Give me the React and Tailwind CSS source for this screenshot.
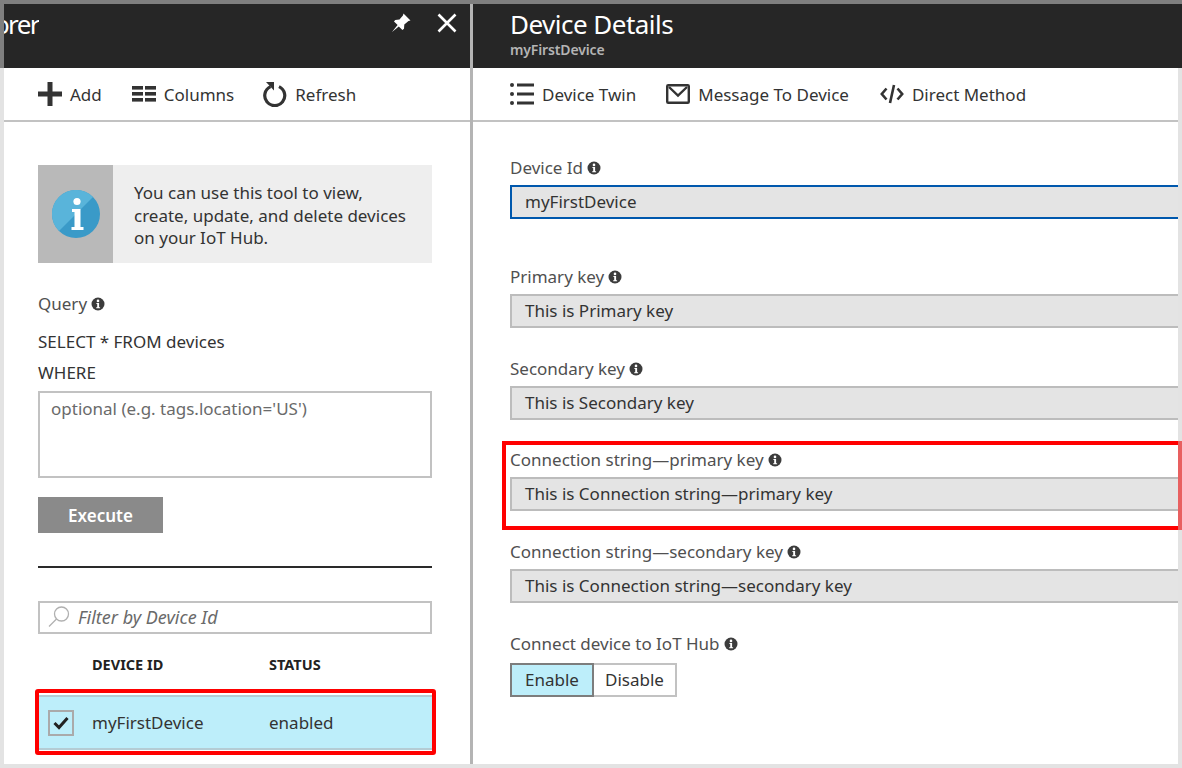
import React from "react";

const fontStack = "font-['Noto_Sans','Open_Sans',sans-serif]";

const InfoDot = () => (
  <svg width="14" height="14" viewBox="0 0 14 14" className="shrink-0">
    <circle cx="7" cy="7" r="6.5" fill="#3c3c3c" />
    <circle cx="7" cy="3.9" r="1.3" fill="#fff" />
    <path d="M5.4 6h2.7v4.2h1V11.3H5.2v-1.1h1V7.1h-.8z" fill="#fff" />
  </svg>
);

const ToolButton = ({ icon, label, className }) => (
  <div className={`flex items-center gap-[8px] ${className || ""}`}>
    {icon}
    <span className="pt-[1px]">{label}</span>
  </div>
);

const Label = ({ children, className }) => (
  <div className={`flex items-center gap-[4px] h-[24px] text-[17px] text-[#505050] ${className || ""}`}>
    <span className="whitespace-nowrap">{children}</span>
    <InfoDot />
  </div>
);

const Field = ({ label, value, focused, className }) => (
  <div className={className}>
    <Label>{label}</Label>
    <div
      className={`mt-[5px] h-[34px] flex items-center pl-[13px] bg-[#e4e4e4] text-[17px] text-[#333] border-y-2 border-l-2 ${
        focused ? "border-[#0058ad]" : "border-[#bcbcbc]"
      }`}
    >
      {value}
    </div>
  </div>
);

const Header = ({ children }) => <div className="h-[64px] bg-[#262626] text-white shrink-0">{children}</div>;

const Toolbar = ({ children, className }) => (
  <div className={`h-[54px] shrink-0 flex items-center border-b-2 border-[#c2c2c2] text-[17px] text-[#333] ${className}`}>
    {children}
  </div>
);

const LeftPanel = () => (
  <div className="w-[466px] shrink-0 flex flex-col">
    <Header>
      <div className="flex items-start h-full">
        <div className="w-[35px] overflow-hidden flex justify-end pt-[4px] text-[26px] leading-[32px] tracking-[-0.06em]">
          <span className="whitespace-nowrap">Device Explorer</span>
        </div>
        <div className="ml-auto flex items-center gap-[24px] pt-[8px] pr-[12px]">
          <svg width="22" height="22" viewBox="0 0 22 22">
            <path d="M13.5 1.5l7 7-2 .6-4.2 3.4-.3 4.3-1.6 1.2-3.6-3.6L2 20l5.6-6.9L4 9.5l1.2-1.6 4.3-.3 3.4-4.2z" fill="#fff" />
          </svg>
          <svg width="22" height="22" viewBox="0 0 22 22" fill="none" stroke="#fff" strokeWidth="2.6">
            <path d="M2.5 2.5l17 17M19.5 2.5l-17 17" />
          </svg>
        </div>
      </div>
    </Header>
    <Toolbar className="pl-[34px]">
      <ToolButton
        className="gap-[7px]"
        icon={
          <svg width="24" height="24" viewBox="0 0 24 24" fill="#333">
            <path d="M9.5 0h5v9.5H24v5h-9.5V24h-5v-9.5H0v-5h9.5z" />
          </svg>
        }
        label="Add"
      />
      <ToolButton
        className="ml-[30px]"
        icon={
          <svg width="24" height="16" viewBox="0 0 24 16" fill="#333">
            <rect x="0" y="0" width="11" height="3.6" />
            <rect x="13" y="0" width="11" height="3.6" />
            <rect x="0" y="6" width="11" height="3.6" />
            <rect x="13" y="6" width="11" height="3.6" />
            <rect x="0" y="12" width="11" height="3.6" />
            <rect x="13" y="12" width="11" height="3.6" />
          </svg>
        }
        label="Columns"
      />
      <ToolButton
        className="ml-[29px]"
        icon={
          <svg width="24" height="26" viewBox="0 0 24 26" fill="none">
            <path d="M16 5.6a10 10 0 1 1-8.5 0" stroke="#333" strokeWidth="3.2" />
            <path d="M3 1h8v8.5z" fill="#333" />
          </svg>
        }
        label="Refresh"
      />
    </Toolbar>
    <div className="flex-1 pl-[34px] pr-[38px] pt-[43px] text-[17px] text-[#333]">
      <div className="flex h-[98px] bg-[#eeeeee]">
        <div className="w-[75px] bg-[#b9b9b9] flex items-center justify-center">
          <svg width="48" height="48" viewBox="0 0 48 48">
            <circle cx="24" cy="24" r="24" fill="#3a9ac8" />
            <path d="M7 41A24 24 0 0 1 41 7z" fill="#59b4da" />
            <circle cx="25" cy="11.5" r="3.6" fill="#fff" />
            <path d="M20 19h8.5v18h3v3H19.5v-3h3V22h-2.5z" fill="#fff" />
          </svg>
        </div>
        <div className="pl-[21px] pt-[17px] leading-[22.5px] whitespace-nowrap">
          You can use this tool to view,
          <br />
          create, update, and delete devices
          <br />
          on your IoT Hub.
        </div>
      </div>
      <Label className="mt-[29px]">Query</Label>
      <div className="mt-[14px] h-[24px] leading-[24px]">SELECT * FROM devices</div>
      <div className="mt-[7px] h-[24px] leading-[24px]">WHERE</div>
      <div className="mt-[6px] h-[87px] border-2 border-[#c2c2c2] pl-[11px] pt-[4px] leading-[24px] text-[#6a6a6a]">
        optional (e.g. tags.location='US')
      </div>
      <div className="mt-[19px] w-[125px] h-[36px] pt-[2px] bg-[#8a8a8a] text-white font-semibold flex items-center justify-center">
        Execute
      </div>
      <div className="mt-[33px] h-[2px] bg-[#2a2a2a]" />
      <div className="mt-[33px] h-[33px] border-2 border-[#c2c2c2] flex items-center pl-[7px] gap-[7px] italic text-[18px] leading-[26px] pb-[2px] text-[#6a6a6a]">
        <svg width="24" height="24" viewBox="0 0 24 24" fill="none" stroke="#b0b0b0" strokeWidth="1.3">
          <circle cx="14.5" cy="9" r="7" />
          <path d="M9.5 14L2 21.5" />
        </svg>
        Filter by Device Id
      </div>
      <div className="mt-[19px] h-[24px] flex items-center text-[14.5px] font-bold text-[#222]">
        <div className="w-[231px] pl-[54px]">DEVICE ID</div>
        <div>STATUS</div>
      </div>
      <div className="relative mt-[18px] h-[55px] bg-[#bdeefa] border-y-2 border-[#b4ccd4] flex items-center">
        <div className="absolute -left-[3px] -right-[4px] -top-[8px] -bottom-[7px] border-4 border-[#ff0000] rounded-[3px]" />
        <div className="w-[54px] pl-[10px]">
          <div className="w-[26px] h-[26px] border-2 border-[#aaaaaa] flex items-center justify-center">
            <svg width="16" height="14" viewBox="0 0 16 14" fill="none" stroke="#222" strokeWidth="3">
              <path d="M1.5 7l4.5 4.5L14.5 2" />
            </svg>
          </div>
        </div>
        <div className="w-[177px]">myFirstDevice</div>
        <div>enabled</div>
      </div>
    </div>
  </div>
);

const RightPanel = () => (
  <div className="flex-1 flex flex-col min-w-0">
    <Header>
      <div className="pl-[37px] pt-[3px]">
        <div className="text-[26px] leading-[34px] tracking-[-0.02em]">Device Details</div>
        <div className="text-[14px] leading-[18px] font-semibold tracking-[-0.01em] text-[#b4b4b4]">myFirstDevice</div>
      </div>
    </Header>
    <Toolbar className="pl-[37px]">
      <ToolButton
        icon={
          <svg width="24" height="24" viewBox="0 0 24 24" fill="#333">
            <circle cx="2" cy="3" r="2" />
            <circle cx="2" cy="12" r="2" />
            <circle cx="2" cy="21" r="2" />
            <rect x="7" y="1.5" width="17" height="3" />
            <rect x="7" y="10.5" width="17" height="3" />
            <rect x="7" y="19.5" width="17" height="3" />
          </svg>
        }
        label="Device Twin"
      />
      <ToolButton
        className="ml-[30px]"
        icon={
          <svg width="24" height="20" viewBox="0 0 24 20" fill="none" stroke="#333" strokeWidth="2.4">
            <rect x="1.2" y="1.2" width="21.6" height="17.6" rx="1" />
            <path d="M3 3l9 8.5L21 3" />
          </svg>
        }
        label="Message To Device"
      />
      <ToolButton
        className="ml-[31px]"
        icon={
          <svg width="24" height="20" viewBox="0 0 24 20" fill="none" stroke="#333" strokeWidth="2.6">
            <path d="M6.5 4.5L1.8 10l4.7 5.5M17.5 4.5l4.7 5.5-4.7 5.5M14 1l-4 18" />
          </svg>
        }
        label="Direct Method"
      />
    </Toolbar>
    <div className="relative flex-1 pl-[37px] pt-[34px]">
      <Field label="Device Id" value="myFirstDevice" focused />
      <Field className="mt-[46px]" label="Primary key" value="This is Primary key" />
      <Field className="mt-[29px]" label="Secondary key" value="This is Secondary key" />
      <Field className="mt-[28px]" label="Connection string—primary key" value="This is Connection string—primary key" />
      <Field className="mt-[29px]" label="Connection string—secondary key" value="This is Connection string—secondary key" />
      <Label className="mt-[29px]">Connect device to IoT Hub</Label>
      <div className="mt-[7px] flex text-[17px] text-[#333]">
        <div className="w-[84px] h-[34px] bg-[#bdeefa] border-2 border-[#7d7d7d] flex items-center justify-center">Enable</div>
        <div className="w-[83px] h-[34px] border-2 border-l-0 border-[#c2c2c2] flex items-center justify-center">Disable</div>
      </div>
      <div className="absolute left-[29px] right-0 top-[319px] h-[89px] border-4 border-r-0 border-[#ff0000]" />
    </div>
  </div>
);

export default function App() {
  return (
    <div className={`w-[1182px] h-[768px] overflow-hidden bg-white flex flex-col ${fontStack}`}>
      <div className="h-[4px] bg-[#7f7f7f] shrink-0" />
      <div className="flex-1 flex min-h-0">
        <div className="w-[4px] shrink-0 flex flex-col bg-[#e3e3e3]">
          <div className="h-[64px] bg-[#7f7f7f]" />
        </div>
        <LeftPanel />
        <div className="w-[3px] shrink-0 bg-[#b4b4b4]" />
        <RightPanel />
        <div className="w-[4px] shrink-0 flex flex-col bg-[#e3e3e3]">
          <div className="h-[64px] bg-[#262626]" />
          <div className="mt-[373px] h-[89px] bg-[#e86060]" />
        </div>
      </div>
      <div className="h-[4px] bg-[#e3e3e3] shrink-0" />
    </div>
  );
}
